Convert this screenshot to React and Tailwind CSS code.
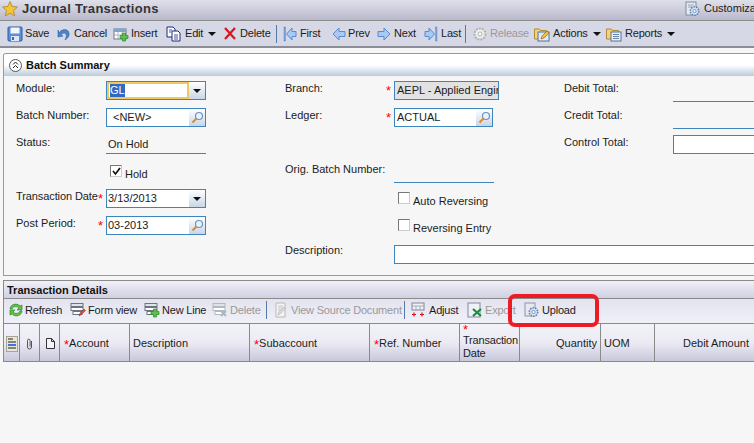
const F = ({ children, w = 16, h = 16 }) => (
  <svg width={w} height={h} viewBox={`0 0 ${w} ${h}`} className="shrink-0">{children}</svg>
);
const Star = () => <F><path d="M8 .5l2.200 5 5.300.5-4 3.600 1.200 5.400L8 12.200 3.300 15l1.200-5.400-4-3.600 5.300-.5z" fill="#f5c535" stroke="#a8842c" strokeWidth=".8"/></F>;
const Gear = ({ c = "#5f84b5", f = "#dbe4f0" }) => (
  <g>
    <circle cx="9.500" cy="10" r="4.200" fill={f} stroke={c} strokeWidth="1.600" strokeDasharray="1.600 1"/>
    <circle cx="9.500" cy="10" r="1.600" fill="#fff" stroke={c} strokeWidth=".8"/>
  </g>
);
const GearDoc = () => <F><rect x="1" y="1" width="10" height="13" fill="#e6e9f0" stroke="#7c8aa0"/><path d="M3 4h6M3 6h4" stroke="#98a6bb"/><Gear/></F>;
const Save = () => <F><rect x="1" y="1" width="14" height="14" rx="1" fill="#5b8fd6" stroke="#2d5d9f"/><rect x="3.500" y="1.500" width="9" height="6" fill="#f2f6fb"/><rect x="4" y="10" width="8" height="5" fill="#dfe6f0"/><rect x="5" y="11" width="2" height="3" fill="#3a69ab"/></F>;
const Undo = () => <F w={14}><path d="M2 7c2-4 9-5 10 0 .6 3-1 5-4 7 1-2 2-4 1-6-1-1.600-4-1-5 1l2 1-5 1V4z" fill="#4d83c9" stroke="#2f5f9f" strokeWidth=".6"/></F>;
const TableIco = ({ g = "#6b7a8c" }) => (
  <g>
    <rect x="1" y="3" width="12" height="10" fill="#fff" stroke={g}/>
    <rect x="1" y="3" width="12" height="3" fill="#7ea4d2"/>
    <path d="M1 9h12M5 6v7M9 6v7" stroke={g} strokeWidth=".5"/>
  </g>
);
const Plus = () => <path d="M9.500 7h3v2.500H15v3h-2.500V15h-3v-2.500H7v-3h2.500z" fill="#5cc04a" stroke="#2b8a2b" strokeWidth=".7"/>;
const Insert = () => <F><TableIco/><Plus/></F>;
const Edit = () => <F><path d="M1 1h6l2 2v8H1z" fill="#fff" stroke="#1c2a7a"/><path d="M6 5h6l2 2v8H6z" fill="#fff" stroke="#1c2a7a"/><path d="M3 4h3M3 6h2M8 9h4M8 11h4M8 13h4" stroke="#1c2a7a" strokeWidth=".8"/></F>;
const XIco = () => <F w={14}><path d="M2 2l10 11M12 2L2 13" stroke="#d8141c" strokeWidth="2.200"/></F>;
const Arr = ({ d, bar }) => (
  <F w={14}>
    <g transform={d === "r" ? "translate(14 0) scale(-1 1)" : undefined}>
      {bar && <rect x="1" y="1" width="1.500" height="14" fill="#7ea8df" stroke="#4a7cc0" strokeWidth=".4"/>}
      <path d={bar ? "M3.500 8L9 2v3.500h4v5H9V14z" : "M1 8l6-6v3.500h6v5H7V14z"} fill="#a9c9f2" stroke="#5b8ad0"/>
    </g>
  </F>
);
const Sep = () => <div className="w-px h-[18px] bg-[#5878a8] shrink-0" />;
const Caret = () => <span className="ml-[2px] w-0 h-0 border-x-[4px] border-t-[4px] border-x-transparent border-t-[#111] shrink-0" />;
const Release = () => <F><circle cx="8" cy="8" r="5.500" fill="#eee" stroke="#b0b0b0" strokeWidth="2" strokeDasharray="2 1"/><circle cx="8" cy="8" r="2" fill="#fff" stroke="#b0b0b0"/></F>;
const Folder = () => <path d="M0.500 3h5l1 1.500h6V13H.5z" fill="#f3d27a" stroke="#b08c3a"/>;
const Actions = () => <F><Folder/><rect x="4" y="6" width="11" height="9" fill="#dfe9f5" stroke="#55729a"/><path d="M7 13l1-3 5-5 2 2-5 5z" fill="#f2c230" stroke="#9a4a20" strokeWidth=".6"/></F>;
const Reports = () => <F><Folder/><rect x="5" y="6" width="10" height="9" fill="#eaf0f8" stroke="#55729a"/><path d="M7 8.500h6M7 10.500h6M7 12.500h6" stroke="#6b86ab"/></F>;
const Refresh = () => <F w={15}><path d="M2 7c0-4 6-7 10-3l2-1v5H9l2-2c-2-2-6-2-7 1z" fill="#62c04a" stroke="#2f8a2f" strokeWidth=".7"/><path d="M14 9c0 4-6 7-10 3l-2 1V8h5l-2 2c2 2 6 2 7-1z" fill="#62c04a" stroke="#2f8a2f" strokeWidth=".7"/></F>;
const Rows = ({ c = "#6c7480" }) => <g><rect x="1" y="1.500" width="12" height="3" fill="#dfe2e8" stroke={c}/><rect x="1" y="5.500" width="12" height="3" fill="#fff" stroke={c}/><rect x="3" y="9.500" width="9" height="3" fill="#fff" stroke={c}/></g>;
const FormView = () => <F><Rows/><path d="M9 14l1-3 4-4 1.500 1.500-4 4z" fill="#e04a3a" stroke="#6a3a3a" strokeWidth=".5"/></F>;
const NewLine = () => <F><Rows/><Plus/></F>;
const DelG = () => <F><Rows c="#b4b8c0"/><path d="M9 9l5 5M14 9l-5 5" stroke="#a8b4c8" strokeWidth="1.800"/></F>;
const SrcDoc = () => <F><path d="M3 1h9v14H3z" fill="#f4f4f4" stroke="#b8b8b8"/><path d="M5 4h5M5 6h5M5 8h3" stroke="#c4c4c4"/><path d="M5 13l1-3 5-5 1.500 1.500-5 5z" fill="#ddd" stroke="#aaa" strokeWidth=".6"/></F>;
const Adjust = () => <F w={14}><rect x="1" y="1" width="12" height="7" fill="#f0f0f4" stroke="#808898"/><path d="M1 4h12M5 4v4M9 4v4" stroke="#808898" strokeWidth=".6"/><path d="M1 12.500h4M3 10.500v4M9 12.500h4M11 10.500v4" stroke="#d8141c" strokeWidth="1.200"/></F>;
const Excel = () => <F><rect x="1" y="1" width="12" height="14" fill="#eef2f8" stroke="#7c8aa0"/><path d="M6 7l8 7M14 7l-8 7" stroke="#1f8a3a" strokeWidth="2.200"/></F>;
const Upload = () => <F><rect x="1" y="1" width="10" height="13" fill="#e6e9f0" stroke="#8a96a8"/><Gear/></F>;
const Search = () => (
  <div className="w-[16px] h-full bg-gradient-to-b from-white to-[#c9d6e6] flex items-center justify-center shrink-0">
    <svg width="13" height="13" viewBox="0 0 13 13"><circle cx="8" cy="5" r="3.500" fill="#e8f2fb" stroke="#6c93bd" strokeWidth="1.200"/><path d="M5.500 7.500L1.500 11.500" stroke="#dd8a2c" strokeWidth="2"/></svg>
  </div>
);
const Drop = () => (
  <div className="w-[16px] h-full bg-gradient-to-b from-white to-[#c9d6e6] flex items-center justify-center shrink-0">
    <span className="w-0 h-0 border-x-[4px] border-t-[4px] border-x-transparent border-t-[#111]" />
  </div>
);
const Req = () => <span className="text-[#f00] text-[13px] leading-none">*</span>;

const Btn = ({ icon, label, w, caret, dim, gap = "gap-[2px]" }) => (
  <div className={`flex items-center ${gap} shrink-0 whitespace-nowrap tracking-[-0.2px] ${w} ${dim ? "text-[#9a9a9a]" : ""}`}>
    {icon}<span>{label}</span>{caret && <Caret />}
  </div>
);

const Box = ({ w, children, bg = "bg-white" }) => (
  <div className={`h-[19px] ${w} ${bg} border border-[#3d85bd] flex items-center overflow-hidden shrink-0`}>{children}</div>
);
const Field = ({ label, req, lw, lc = "", children }) => (
  <div className="flex items-start h-[27px]">
    <div className={`${lw} ${lc} shrink-0 relative h-[19px] leading-[14px] whitespace-nowrap`}>
      {label}
      {req && <span className="absolute right-[3px] top-[3px]"><Req /></span>}
    </div>
    {children}
  </div>
);
const Check = ({ label, on, off }) => (
  <div className={`flex items-start h-[27px] ${off}`}>
    <div className="w-[12px] h-[12px] mt-[1px] bg-white border border-[#777] border-r-[#ccc] border-b-[#ccc] flex items-center justify-center">
      {on && <svg width="9" height="9" viewBox="0 0 9 9"><path d="M1 4l2.500 3L8 1" fill="none" stroke="#111" strokeWidth="1.700"/></svg>}
    </div>
    <span className="ml-[3px] mt-[3px] leading-[14px]">{label}</span>
  </div>
);

const heads = [
  ["w-[16px]", "", "grid"], ["w-[20px]", "", "clip"], ["w-[20px]", "", "doc"],
  ["w-[70px]", "Account", "req"], ["w-[120px]", "Description"], ["w-[120px]", "Subaccount", "req"],
  ["w-[90px]", "Ref. Number", "req"], ["w-[60px]", "Transaction Date", "tall"],
  ["w-[81px]", "Quantity", "right"], ["w-[54px]", "UOM"], ["w-[110px]", "Debit Amount", "wide"],
];

const Head = ([w, text, kind]) => (
  <div key={w + text + kind} className={`${w} shrink-0 h-full border-r border-[#8a8a8a] flex items-center relative pt-[2px] ${kind === "right" ? "justify-end pr-[3px]" : kind === "wide" ? "justify-end pr-[15px]" : "pl-[3px]"} ${kind === "req" ? "pl-[4px]" : ""}`}>
    {kind === "grid" && <svg width="12" height="16" viewBox="0 0 12 16" className="-ml-[1px]"><rect x=".5" y=".5" width="11" height="15" fill="#e8e6d8" stroke="#a8a490"/><path d="M2 3h5M2 6h8M2 12h8" stroke="#222"/><rect x="2" y="8" width="8" height="2" fill="#3f74d8"/></svg>}
    {kind === "clip" && <svg width="9" height="12" viewBox="0 0 9 12" className="ml-[2px]"><path d="M6.500 3v6a2 2 0 0 1-4 0V2.500a1.300 1.300 0 0 1 2.600 0V8.500" fill="none" stroke="#555" strokeWidth="1"/></svg>}
    {kind === "doc" && <svg width="9" height="11" viewBox="0 0 9 11" className="ml-[3px]"><path d="M.5.500h5l3 3v7h-8zM5.500.500v3h3" fill="#f4f4f8" stroke="#333"/></svg>}
    {kind === "req" && <span className="text-[#f00] text-[13px] leading-none mt-[1px]">*</span>}
    {kind === "tall" ? (
      <div className="leading-[13px] pt-[6px] tracking-[-0.2px]">
        <span className="absolute left-[3px] top-[1px] text-[#f00] text-[13px] leading-[9px]">*</span>
        Transaction<br />Date
      </div>
    ) : <span className="whitespace-nowrap">{text}</span>}
  </div>
);

export default function App() {
  return (
    <div className="w-[754px] h-[443px] overflow-hidden bg-[#f6f6f6] text-[11px] text-[#1c1c1c] relative" style={{ fontFamily: '"Liberation Sans", sans-serif' }}>
      {/* title */}
      <div className="h-[21px] bg-gradient-to-b from-[#e0e0ec] to-[#b9b9cc] border-b border-[#8c8c8c] flex items-center pl-[2px] pr-0 pb-[3px]">
        <Star />
        <span className="ml-[4px] font-bold text-[13px] text-[#333] tracking-[0.3px] leading-none">Journal Transactions</span>
        <div className="ml-auto flex items-center gap-[3px] whitespace-nowrap w-[69px] overflow-hidden shrink-0"><GearDoc /><span>Customization</span></div>
      </div>
      {/* main toolbar */}
      <div className="h-[27px] bg-[#d6d8e6] border-b-2 border-[#8c8c96] flex items-center pl-[7px]">
        <Btn w="w-[50px]" icon={<Save />} label="Save" />
        <Btn w="w-[56px]" icon={<Undo />} gap="gap-[3px]" label="Cancel" />
        <Btn w="w-[53px]" icon={<Insert />} label="Insert" />
        <Btn w="w-[57px]" icon={<Edit />} gap="gap-[3px]" label="Edit" caret />
        <Btn w="w-[53px]" icon={<XIco />} gap="gap-[3px]" label="Delete" />
        <Sep />
        <div className="w-[6px]" />
        <Btn w="w-[49px]" icon={<Arr bar />} gap="gap-[3px]" label="First" />
        <Btn w="w-[45px]" icon={<Arr />} label="Prev" />
        <Btn w="w-[47px]" icon={<Arr d="r" />} gap="gap-[3px]" label="Next" />
        <Btn w="w-[41px]" icon={<Arr d="r" bar />} gap="gap-[3px]" label="Last" />
        <Sep />
        <div className="w-[6px]" />
        <Btn w="w-[62px]" icon={<Release />} gap="gap-[2px]" label="Release" dim />
        <Btn w="w-[72px]" icon={<Actions />} gap="gap-[3px]" label="Actions" caret />
        <Btn w="w-[80px]" icon={<Reports />} gap="gap-[3px]" label="Reports" caret />
      </div>
      {/* batch summary */}
      <div className="mt-[5px] ml-[3px] h-[223px] border-l border-t border-b border-[#9a9a9a] rounded-tl-[3px] bg-[#f6f6f6] overflow-hidden">
        <div className="h-[22px] bg-gradient-to-b from-white via-white to-[#bccbdc] flex items-center pl-[5px]">
          <div className="w-[13px] h-[13px] rounded-full bg-white border border-[#555] flex items-center justify-center">
            <svg width="7" height="8" viewBox="0 0 7 8"><path d="M1 3.500l2.500-2.500L6 3.500M1 7l2.500-2.500L6 7" fill="none" stroke="#222" strokeWidth="1"/></svg>
          </div>
          <span className="ml-[4px] font-bold text-[#111] leading-none">Batch Summary</span>
        </div>
        <div className="grid grid-cols-[269px_279px_1fr] pl-[12px] pt-[5px] overflow-hidden">
          <Field lw="w-[90px]" label="Module:">
            <Box w="w-[100px]">
              <div className="flex-1 h-full border-2 border-[#f0c860] pl-[1px] flex items-center"><span className="bg-[#316ac5] text-white leading-[13px]">GL</span></div>
              <Drop />
            </Box>
          </Field>
          <Field lw="w-[109px]" label="Branch:" req>
            <Box w="w-[105px]" bg="bg-[#e2e2e2]"><span className="pl-[2px] whitespace-nowrap">AEPL - Applied Engineering</span></Box>
          </Field>
          <Field lw="w-[109px]" label="Debit Total:"><div className="w-[90px] h-[21px] border-b border-[#3d85bd]" /></Field>

          <Field lw="w-[90px]" label="Batch Number:">
            <Box w="w-[100px]"><span className="flex-1 pl-[6px]">&lt;NEW&gt;</span><Search /></Box>
          </Field>
          <Field lw="w-[109px]" label="Ledger:" req>
            <Box w="w-[99px]"><span className="flex-1 pl-[2px]">ACTUAL</span><Search /></Box>
          </Field>
          <Field lw="w-[109px]" label="Credit Total:"><div className="w-[90px] h-[21px] border-b border-[#3d85bd]" /></Field>

          <Field lw="w-[90px]" label="Status:">
            <div className="w-[100px] h-[19px] border-b border-[#3d85bd] pl-[2px] leading-[18px]">On Hold</div>
          </Field>
          <div className="h-[27px]" />
          <Field lw="w-[109px]" label="Control Total:"><Box w="w-[90px]" /></Field>

          <Check on label="Hold" off="ml-[94px] pt-[2px]" />
          <Field lw="w-[109px]" label="Orig. Batch Number:"><div className="w-[100px] h-[21px] border-b border-[#3d85bd]" /></Field>
          <div className="h-[27px]" />

          <Field lw="w-[90px]" label="Transaction Date" req lc="tracking-[-0.1px]">
            <Box w="w-[100px]"><span className="flex-1 pl-[1px]">3/13/2013</span><Drop /></Box>
          </Field>
          <Check label="Auto Reversing" off="ml-[113px] pt-[2px]" />
          <div className="h-[27px]" />

          <Field lw="w-[90px]" label="Post Period:" req>
            <Box w="w-[100px]"><span className="flex-1 pl-[1px]">03-2013</span><Search /></Box>
          </Field>
          <Check label="Reversing Entry" off="ml-[113px] pt-[2px]" />
          <div className="h-[27px]" />

          <div className="h-[27px]" />
          <div className="col-span-2 pt-[2px]">
            <Field lw="w-[109px]" lc="-mt-[2px]" label="Description:"><Box w="w-[400px]" /></Field>
          </div>
        </div>
      </div>
      {/* transaction details */}
      <div className="mt-[4px] ml-[3px] border-l border-t border-[#8a8a8a]">
        <div className="h-[18px] bg-gradient-to-b from-[#f0f0f8] to-[#d0d0e2] border-b border-[#8a8a8a] flex items-center pl-[3px] pt-[2px] font-bold text-[#111]">Transaction Details</div>
        <div className="h-[25px] bg-gradient-to-b from-[#e4e4f0] to-[#f0f0f8] border-b border-[#8a8a8a] flex items-center pl-[4px] pb-[2px]">
          <Btn w="w-[62px]" icon={<Refresh />} gap="gap-[2px]" label="Refresh" />
          <Btn w="w-[74px]" icon={<FormView />} label="Form view" />
          <Btn w="w-[68px]" icon={<NewLine />} label="New Line" />
          <Btn w="w-[54px]" icon={<DelG />} label="Delete" dim />
          <Sep />
          <div className="w-[6px]" />
          <Btn w="w-[131px]" icon={<SrcDoc />} label="View Source Document" dim />
          <Sep />
          <div className="w-[6px]" />
          <Btn w="w-[56px]" icon={<Adjust />} gap="gap-[4px]" label="Adjust" />
          <Btn w="w-[57px]" icon={<Excel />} label="Export" dim />
          <Btn w="w-[60px]" icon={<Upload />} label="Upload" />
        </div>
        <div className="h-[38px] bg-gradient-to-b from-[#f2f2f8] via-[#ecebf4] to-[#c8c8dc] border-b border-[#8a8a8a] flex">
          {heads.map(Head)}
        </div>
      </div>
      {/* annotation */}
      <div className="absolute left-[508px] top-[294px] w-[91px] h-[33px] border-[4px] border-[#ed1c24] rounded-[7px]" />
    </div>
  );
}
